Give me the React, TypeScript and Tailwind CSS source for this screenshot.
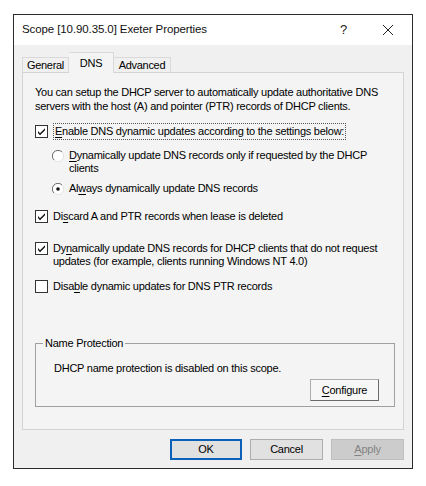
import React from "react";

const font = { fontFamily: '"Liberation Sans", Arial, sans-serif' };

function CheckBox({ checked }: { checked: boolean }) {
  return (
    <svg width="13" height="13" viewBox="0 0 13 13" className="shrink-0">
      <rect x="0.5" y="0.5" width="12" height="12" fill="#ffffff" stroke="#333333" />
      {checked && (
        <path d="M3 6 L5 8.2 L10 3.2 L10 5.2 L5 10.2 L3 8 Z" fill="#111111" />
      )}
    </svg>
  );
}

function Radio({ checked }: { checked: boolean }) {
  return (
    <svg width="12" height="12" viewBox="0 0 12 12" className="shrink-0">
      <circle cx="6" cy="6" r="5.5" fill="#ffffff" />
      <path d="M10 2 A5.5 5.5 0 0 0 2 10" fill="none" stroke="#6d6d6d" strokeWidth="1" />
      <path d="M2 10 A5.5 5.5 0 0 0 10 2" fill="none" stroke="#e3e3e3" strokeWidth="1" />
      {checked && <circle cx="6" cy="6" r="1.8" fill="#111111" />}
    </svg>
  );
}

function U({ children }: { children: React.ReactNode }) {
  return <span className="underline underline-offset-[2px]">{children}</span>;
}

export default function App() {
  return (
    <div className="min-h-[486px] w-[426px] bg-white pt-[14px] pl-[13px]" style={font}>
      <div className="flex h-[455px] w-[400px] flex-col border border-[#2b2b2b] bg-[#f0f0f0] text-[11px] tracking-[-0.25px] text-black">
        {/* Title bar */}
        <div className="flex h-[30px] items-center bg-white pl-[8px]">
          <span className="text-[11.5px] tracking-[-0.1px] text-[#111]">Scope [10.90.35.0] Exeter Properties</span>
          <span className="ml-auto mr-[35px] text-[13px] text-[#222]">?</span>
          <svg width="12" height="12" viewBox="0 0 12 12" className="mr-[18px]">
            <path d="M1 1 L11 11 M11 1 L1 11" stroke="#222" strokeWidth="1" />
          </svg>
        </div>

        {/* Body */}
        <div className="flex flex-1 flex-col px-[8px] pt-[7px]">
          {/* Tabs */}
          <div className="flex h-[20px] items-end">
            <div className="flex h-[15px] w-[47px] items-center justify-center border border-b-0 border-[#d9d9d9] bg-[#f0f0f0] text-[11px] tracking-[-0.3px]">
              General
            </div>
            <div className="relative z-10 -mb-[1px] flex h-[21px] w-[45px] items-start justify-center border border-b-0 border-l-0 border-[#d9d9d9] bg-[#f4f4f4] pt-[2px] text-[11px]">
              DNS
            </div>
            <div className="flex h-[15px] w-[57px] items-center justify-center border border-b-0 border-l-0 border-[#d9d9d9] bg-[#f0f0f0] text-[11px] tracking-[-0.3px]">
              Advanced
            </div>
          </div>

          {/* Panel */}
          <div className="flex h-[358px] w-[382px] flex-col border border-[#d4d4d4] bg-[#f4f4f4] pl-[12px] pr-[8px] pt-[12px]">
            <p className="leading-[14px]">
              You can setup the DHCP server to automatically update authoritative DNS servers with the host (A) and pointer (PTR) records of DHCP clients.
            </p>

            <div className="mt-[10px] flex items-center gap-[5px]">
              <CheckBox checked />
              <span className="border border-dotted border-[#555] px-[1px] leading-[15px]">
                <U>E</U>nable DNS dynamic updates according to the settings below:
              </span>
            </div>

            <div className="mt-[9px] flex items-start gap-[5px] pl-[17px]">
              <div className="pt-[1px]">
                <Radio checked={false} />
              </div>
              <span className="leading-[13px]">
                <U>D</U>ynamically update DNS records only if requested by the DHCP clients
              </span>
            </div>

            <div className="mt-[7px] flex items-center gap-[5px] pl-[17px]">
              <Radio checked />
              <span className="leading-[13px]">
                Al<U>w</U>ays dynamically update DNS records
              </span>
            </div>

            <div className="mt-[15px] flex items-center gap-[5px]">
              <CheckBox checked />
              <span className="leading-[13px]">
                Di<U>s</U>card A and PTR records when lease is deleted
              </span>
            </div>

            <div className="mt-[19px] flex items-start gap-[5px]">
              <CheckBox checked />
              <span className="leading-[13px]">
                Dy<U>n</U>amically update DNS records for DHCP clients that do not request updates (for example, clients running Windows NT 4.0)
              </span>
            </div>

            <div className="mt-[12px] flex items-center gap-[5px]">
              <CheckBox checked={false} />
              <span className="leading-[13px]">
                Disa<U>b</U>le dynamic updates for DNS PTR records
              </span>
            </div>

            {/* Group box */}
            <div className="relative mt-[50px] h-[64px] w-[360px] border border-[#a0a0a0]">
              <span className="absolute -top-[8px] left-[7px] bg-[#f4f4f4] px-[2px] leading-[14px]">
                Name Protection
              </span>
              <div className="pl-[18px] pt-[17px] leading-[14px]">DHCP name protection is disabled on this scope.</div>
              <div className="flex justify-end pr-[15px] pt-[4px]">
                <button className="flex h-[22px] w-[69px] items-center justify-center border border-[#adadad] border-b-[#6a6a6a] border-r-[#6a6a6a] bg-[#f7f7f7]">
                  <U>C</U>onfigure
                </button>
              </div>
            </div>
          </div>

          {/* Bottom buttons */}
          <div className="mt-[9px] flex justify-end gap-[8px]">
            <button className="flex h-[21px] w-[72px] items-center justify-center border-2 border-[#0b61b8] bg-[#e1e1e1]">
              OK
            </button>
            <button className="flex h-[21px] w-[73px] items-center justify-center border border-[#adadad] bg-[#e1e1e1]">
              Cancel
            </button>
            <button className="flex h-[21px] w-[73px] items-center justify-center border border-[#bfbfbf] bg-[#cccccc] text-[#838383]">
              <U>A</U>pply
            </button>
          </div>
        </div>
      </div>
    </div>
  );
}
